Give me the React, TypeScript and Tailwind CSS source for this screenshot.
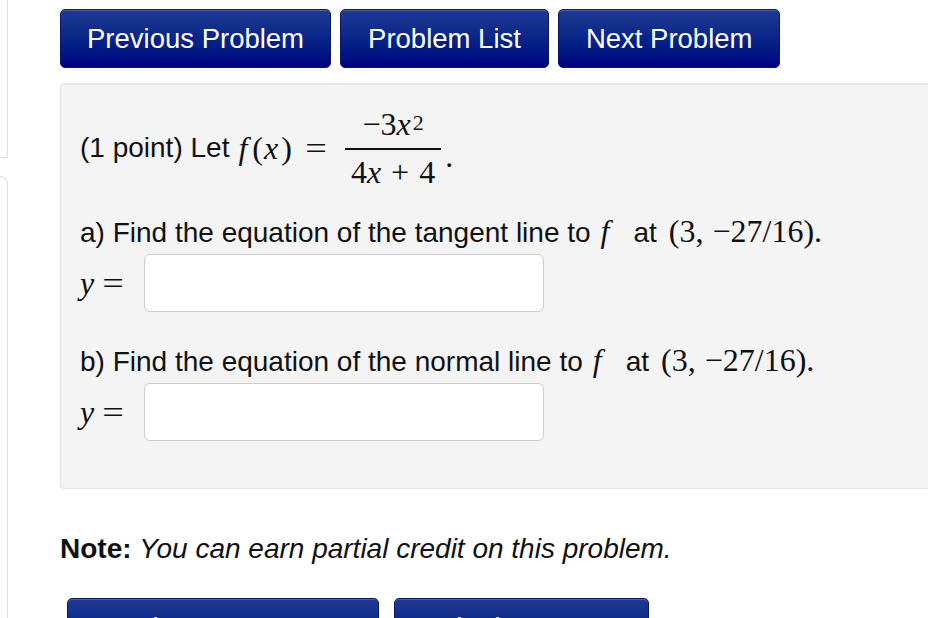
const sans = "font-['Liberation_Sans','Helvetica',Arial,sans-serif]";
const serif = "font-['Liberation_Serif','Times_New_Roman',serif]";

function NavButton({ label, px = "px-[26px]" }: { label: string; px?: string }) {
  return (
    <button
      type="button"
      className={`flex h-[59px] items-center rounded-[5px] border border-[#0b1766] bg-linear-to-b from-[#1f3a91] to-[#000080] ${px} text-[27.5px] leading-none text-white shadow-[inset_0_1px_0_rgba(255,255,255,0.2)] ${sans}`}
    >
      {label}
    </button>
  );
}

function I({ children }: { children: React.ReactNode }) {
  return <span className="italic">{children}</span>;
}

function AnswerRow() {
  return (
    <div className="mt-[1px] flex items-center">
      <span className={`${serif} flex items-center text-[32px] leading-none`}>
        <I>y</I>
        <span className="ml-[10px] inline-block scale-x-[1.2]">=</span>
      </span>
      <input
        type="text"
        className="ml-[22px] h-[58px] w-[400px] rounded-[6px] border border-[#cccccc] bg-white px-3 text-[26px] outline-none"
      />
    </div>
  );
}

function PartLine({ letter, kind }: { letter: string; kind: string }) {
  return (
    <div className="flex items-baseline text-[28px] leading-[40px]">
      <span>
        {letter}) Find the equation of the {kind} line to
      </span>
      <span className={`${serif} ml-[10px] mr-[24px] text-[32px]`}>
        <I>f</I>
      </span>
      <span>at</span>
      <span className={`${serif} ml-[12px] text-[32px]`}>
        (3,<span className="ml-[9px]">−27/16).</span>
      </span>
    </div>
  );
}

export default function App() {
  return (
    <div className={`flex h-[618px] w-[928px] overflow-hidden bg-white text-[#111111] ${sans}`}>
      {/* side panel edge */}
      <div className="flex w-[8px] flex-none flex-col">
        <div className="h-[158px] border-r border-b border-[#dedede]" />
        <div className="mt-[18px] flex-1 rounded-tr-[12px] border-t border-r border-[#dedede]" />
      </div>

      <div className="ml-[52px] w-[900px] flex-none pt-[9px]">
        <div className="flex gap-[9px]">
          <NavButton label="Previous Problem" />
          <NavButton label="Problem List" px="px-[27px]" />
          <NavButton label="Next Problem" px="px-[27px]" />
        </div>

        <div className="mt-[15px] rounded-[4px] border border-[#e3e3e3] bg-[#f4f4f4] pt-[22px] pb-[47px] pl-[19px] shadow-[inset_0_1px_1px_rgba(0,0,0,0.05)]">
          <div className="flex items-center text-[28px]">
            <span>(1 point) Let</span>
            <span className={`${serif} ml-[9px] flex items-center text-[32px]`}>
              <I>f</I>
              <span className="ml-[5px]">(</span>
              <span className="ml-[1px] italic">x</span>
              <span className="ml-[3px]">)</span>
              <span className="ml-[15px] inline-block scale-x-[1.2]">=</span>
            </span>
            <span className={`${serif} ml-[20px] inline-flex flex-col items-center text-[32px]`}>
              <span className="pb-[6px] leading-[36px]">
                −3<I>x</I>
                <sup className="relative -top-[5px] ml-[2px] text-[22px]">2</sup>
              </span>
              <span className="h-[2px] w-full bg-[#111111]" />
              <span className="flex items-center px-[6px] pt-[4px] leading-[36px]">
                4<I>x</I>
                <span className="mx-[10px]">+</span>4
              </span>
            </span>
            <span className={`${serif} ml-[4px] mt-[16px] text-[32px]`}>.</span>
          </div>

          <div className="mt-[21px]">
            <PartLine letter="a" kind="tangent" />
          </div>
          <AnswerRow />

          <div className="mt-[28px]">
            <PartLine letter="b" kind="normal" />
          </div>
          <AnswerRow />
        </div>

        <p className="mt-[40px] text-[28px] leading-[40px]">
          <b>Note:</b> <i>You can earn partial credit on this problem.</i>
        </p>

        <div className="mt-[29px] ml-[7px] flex gap-[15px]">
          <NavButton label="Preview My Answers" px="px-[28px]" />
          <NavButton label="Submit Answers" px="px-[28px]" />
        </div>
      </div>
    </div>
  );
}
